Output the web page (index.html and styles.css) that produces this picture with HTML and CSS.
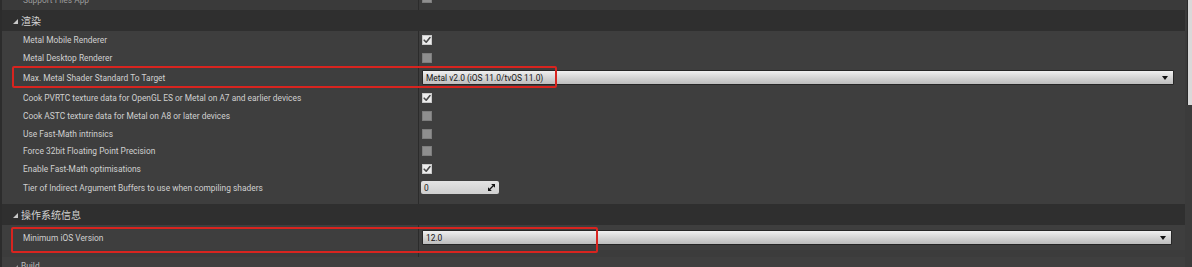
FILE: index.html
```html
<!DOCTYPE html>
<html lang="zh">
<head>
<meta charset="utf-8">
<title>Settings</title>
<link rel="stylesheet" href="styles.css">
</head>
<body>
<div class="panel">
  <div class="row row-cut">
    <div class="name"><span class="cut-label">Support Files App</span></div>
    <div class="value"><span class="cb cb-cut"></span></div>
  </div>

  <div class="cat"><span class="tri"></span><span class="cat-text">渲染</span></div>
  <div class="section">
    <div class="row"><div class="name">Metal Mobile Renderer</div><div class="value"><span class="cb on"><svg viewBox="0 0 10 10"><polyline points="2.2,5.2 4.2,7.2 8,2.6"/></svg></span></div></div>
    <div class="row"><div class="name">Metal Desktop Renderer</div><div class="value"><span class="cb"></span></div></div>
    <div class="row row-tall">
      <div class="name">Max. Metal Shader Standard To Target</div>
      <div class="value"><div class="combo"><span class="combo-text">Metal v2.0 (iOS 11.0/tvOS 11.0)</span><span class="arrow"></span></div></div>
      <div class="mark mark-1"></div>
    </div>
    <div class="row row-19"><div class="name">Cook PVRTC texture data for OpenGL ES or Metal on A7 and earlier devices</div><div class="value"><span class="cb on"><svg viewBox="0 0 10 10"><polyline points="2.2,5.2 4.2,7.2 8,2.6"/></svg></span></div></div>
    <div class="row"><div class="name">Cook ASTC texture data for Metal on A8 or later devices</div><div class="value"><span class="cb"></span></div></div>
    <div class="row row-17"><div class="name">Use Fast-Math intrinsics</div><div class="value"><span class="cb"></span></div></div>
    <div class="row"><div class="name">Force 32bit Floating Point Precision</div><div class="value"><span class="cb"></span></div></div>
    <div class="row"><div class="name">Enable Fast-Math optimisations</div><div class="value"><span class="cb on"><svg viewBox="0 0 10 10"><polyline points="2.2,5.2 4.2,7.2 8,2.6"/></svg></span></div></div>
    <div class="row row-19">
      <div class="name">Tier of Indirect Argument Buffers to use when compiling shaders</div>
      <div class="value"><div class="num"><span class="num-text">0</span><svg class="num-icon" viewBox="0 0 8 8"><polygon points="3.6,0 8,0 8,4.4"/><polygon points="0,3.6 0,8 4.4,8"/><line x1="6" y1="2" x2="2" y2="6"/></svg></div></div>
    </div>
    <div class="row-pad"><div class="name"></div><div class="value"></div></div>
  </div>

  <div class="cat"><span class="tri"></span><span class="cat-text">操作系统信息</span></div>
  <div class="section">
    <div class="row row-ios">
      <div class="name">Minimum iOS Version</div>
      <div class="value"><div class="combo combo-2"><span class="combo-text">12.0</span><span class="arrow"></span></div></div>
      <div class="mark mark-2"></div>
    </div>
    <div class="row-pad2"><div class="name"></div><div class="value"></div></div>
  </div>
  <div class="cat cat-cut"><span class="tri"></span><span class="cut-label2">Build</span></div>

  <div class="scroll"></div>
</div>
</body>
</html>
```
FILE: styles.css
```css
html, body {
  margin: 0;
  padding: 0;
  background: #3b3b3b;
}
body {
  width: 1192px;
  height: 267px;
  overflow: hidden;
  font-family: Roboto, "Liberation Sans", "Noto Sans CJK SC", sans-serif;
  font-size: 8.4px;
  color: #d0d0d0;
}
.panel {
  position: relative;
  width: 1192px;
  height: 267px;
  overflow: hidden;
  background: #3b3b3b;
  border-left: 2px solid #2c2c2c;
  box-sizing: border-box;
}
.row {
  position: relative;
  display: flex;
  height: 18px;
  width: 1183px;
  background: #3e3e3e;
}
.row-tall { height: 21px; }
.row-19 { height: 19px; }
.row-17 { height: 17px; }
.row-ios { height: 25px; }
.row-pad { display: flex; height: 7px; width: 1183px; background: #3e3e3e; }
.row-pad2 { display: flex; height: 7px; width: 1183px; background: #3c3c3c; }
.row-pad .name, .row-pad2 .name { padding: 0; }
.name {
  width: 416px;
  flex: none;
  box-sizing: border-box;
  padding-left: 21px;
  display: flex;
  align-items: center;
  white-space: nowrap;
  overflow: hidden;
}
.value {
  flex: 1;
  display: flex;
  align-items: center;
  border-left: 1px solid #2b2b2b;
  padding-left: 3px;
  padding-right: 11px;
  box-sizing: border-box;
}
.row-cut {
  height: 10px;
  background: #3a3a3a;
  overflow: hidden;
}
.row-cut .name, .row-cut .value { align-items: flex-start; }
.cut-label {
  display: block;
  margin-top: -6px;
  line-height: 12px;
  color: #9a9a9a;
}
.cb {
  width: 10px;
  height: 10px;
  border-radius: 1px;
  background: #8e8e8e;
  box-shadow: inset 0 0 0 1px #7d7d7d;
  display: flex;
}
.cb-cut { margin-top: -7px; }
.cb.on {
  background: #ececec;
  box-shadow: inset 0 0 0 1px #c9c9c9;
}
.cb svg { width: 10px; height: 10px; }
.cb polyline {
  fill: none;
  stroke: #4a4a4a;
  stroke-width: 1.6;
  stroke-linecap: round;
  stroke-linejoin: round;
}
.cat {
  display: flex;
  align-items: center;
  height: 21px;
  width: 1183px;
  background: #2f2f2f;
  padding-left: 11px;
  box-sizing: border-box;
}
.tri {
  width: 0;
  height: 0;
  border-left: 5px solid transparent;
  border-bottom: 5px solid #c8c8c8;
  margin-right: 3px;
  margin-top: 2px;
}
.cat-text {
  font-family: "Noto Sans CJK SC", sans-serif;
  font-size: 10px;
  color: #d2d2d2;
}
.cat-cut {
  height: 10px;
  align-items: flex-end;
  background: #3f3f3f;
  overflow: hidden;
}
.cat-cut .tri { margin-bottom: -3px; border-bottom-color: #9a9a9a; }
.cut-label2 {
  line-height: 10px;
  margin-bottom: -4px;
  color: #bdbdbd;
}
.combo {
  flex: 1;
  height: 15px;
  box-sizing: border-box;
  border: 1px solid #262626;
  border-radius: 1px;
  background: linear-gradient(#f0f0f0, #d8d8d8 45%, #bdbdbd);
  display: flex;
  align-items: center;
  padding-left: 3px;
  padding-right: 5px;
  color: #151515;
}
.combo-text { flex: 1; white-space: nowrap; }
.arrow {
  width: 0;
  height: 0;
  border-left: 3px solid transparent;
  border-right: 3px solid transparent;
  border-top: 4px solid #111;
}
.combo-2 { margin-right: 2px; }
.num {
  width: 78px;
  height: 13px;
  box-sizing: border-box;
  border-radius: 2px;
  background: linear-gradient(#e4e4e4, #cfcfcf);
  display: flex;
  align-items: center;
  padding-left: 3px;
  padding-right: 4px;
  color: #222;
  margin-left: -1px;
}
.num-text { flex: 1; }
.num-icon { width: 7px; height: 7px; }
.num-icon polygon { fill: #111; }
.num-icon line { stroke: #111; stroke-width: 1.4; }
.mark {
  position: absolute;
  border: 2px solid #d8241f;
  border-radius: 2px;
  box-sizing: border-box;
}
.mark-1 { left: 10px; top: -1px; width: 545px; height: 22px; }
.mark-2 { left: 9px; top: 2px; width: 587px; height: 26px; }
.scroll {
  position: absolute;
  right: 0;
  top: 0;
  width: 4px;
  height: 105px;
  background: #d9d9d9;
  border-left: 1px solid #2a2a2a;
}
```
